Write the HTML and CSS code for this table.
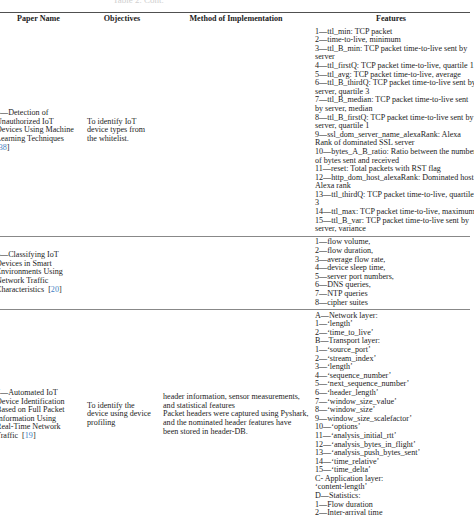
FILE: index.html
```html
<!DOCTYPE html>
<html lang="en">
<head>
<meta charset="utf-8">
<title>Table</title>
<link rel="stylesheet" href="styles.css">
</head>
<body>
<div class="caption">Table 2. Cont.</div>
<table class="tbl">
  <colgroup>
    <col class="c1"><col class="c2"><col class="c3"><col class="c4">
  </colgroup>
  <thead>
    <tr>
      <th>Paper Name</th>
      <th>Objectives</th>
      <th>Method of Implementation</th>
      <th>Features</th>
    </tr>
  </thead>
  <tbody>
    <tr>
      <td>5—Detection of<br>Unauthorized IoT<br>Devices Using Machine<br>Learning Techniques<br>[<span class="ref">38</span>]</td>
      <td>To identify IoT<br>device types from<br>the whitelist.</td>
      <td></td>
      <td class="feat">1—ttl_min: TCP packet<br>2—time-to-live, minimum<br>3—ttl_B_min: TCP packet time-to-live sent by<br>server<br>4—ttl_firstQ: TCP packet time-to-live, quartile 1<br>5—ttl_avg: TCP packet time-to-live, average<br>6—ttl_B_thirdQ: TCP packet time-to-live sent by<br>server, quartile 3<br>7—ttl_B_median: TCP packet time-to-live sent<br>by server, median<br>8—ttl_B_firstQ: TCP packet time-to-live sent by<br>server, quartile 1<br>9—ssl_dom_server_name_alexaRank: Alexa<br>Rank of dominated SSL server<br>10—bytes_A_B_ratio: Ratio between the number<br>of bytes sent and received<br>11—reset: Total packets with RST flag<br>12—http_dom_host_alexaRank: Dominated host<br>Alexa rank<br>13—ttl_thirdQ: TCP packet time-to-live, quartile<br>3<br>14—ttl_max: TCP packet time-to-live, maximum<br>15—ttl_B_var: TCP packet time-to-live sent by<br>server, variance</td>
    </tr>
    <tr>
      <td>6—Classifying IoT<br>Devices in Smart<br>Environments Using<br>Network Traffic<br>Characteristics &nbsp;[<span class="ref">20</span>]</td>
      <td></td>
      <td></td>
      <td class="feat">1—flow volume,<br>2—flow duration,<br>3—average flow rate,<br>4—device sleep time,<br>5—server port numbers,<br>6—DNS queries,<br>7—NTP queries<br>8—cipher suites</td>
    </tr>
    <tr>
      <td>7—Automated IoT<br>Device Identification<br>Based on Full Packet<br>Information Using<br>Real-Time Network<br>Traffic &nbsp;[<span class="ref">19</span>]</td>
      <td>To identify the<br>device using device<br>profiling</td>
      <td>header information, sensor measurements,<br>and statistical features<br>Packet headers were captured using Pyshark,<br>and the nominated header features have<br>been stored in header-DB.</td>
      <td class="feat">A—Network layer:<br>1—‘length’<br>2—‘time_to_live’<br>B—Transport layer:<br>1—‘source_port’<br>2—‘stream_index’<br>3—‘length’<br>4—‘sequence_number’<br>5—‘next_sequence_number’<br>6—‘header_length’<br>7—‘window_size_value’<br>8—‘window_size’<br>9—window_size_scalefactor’<br>10—‘options’<br>11—‘analysis_initial_rtt’<br>12—‘analysis_bytes_in_flight’<br>13—‘analysis_push_bytes_sent’<br>14—‘time_relative’<br>15—‘time_delta’<br>C- Application layer:<br>‘content-length’<br>D—Statistics:<br>1—Flow duration<br>2—Inter-arrival time</td>
    </tr>
  </tbody>
</table>
</body>
</html>
```
FILE: styles.css
```css
html, body {
  margin: 0;
  padding: 0;
  background: #fff;
  overflow: hidden;
}
body {
  font-family: "Liberation Serif", "Times New Roman", serif;
  font-size: 8.1px;
  line-height: 8.6px;
  color: #1c1c1c;
  width: 474px;
  height: 526px;
}
.caption {
  margin-top: -4px;
  padding-left: 113px;
  height: 16px;
  color: #d0d0d0;
  font-size: 9px;
  line-height: 9px;
}
.tbl {
  table-layout: fixed;
  border-collapse: collapse;
  margin-left: -7px;
  width: 477px;
  border-top: 1.5px solid #505050;
}
.c1 { width: 91px; }
.c2 { width: 76px; }
.c3 { width: 152px; }
.c4 { width: 158px; }
.tbl th {
  font-weight: bold;
  text-align: center;
  padding: 1.5px 3px 3px;
  white-space: nowrap;
}
.tbl td {
  text-align: left;
  vertical-align: middle;
  padding: 1.5px 3px 2px;
  white-space: nowrap;
}
.tbl tbody tr + tr td {
  border-top: 1px solid #888;
}
.ref {
  color: #3f7fc4;
}
```
